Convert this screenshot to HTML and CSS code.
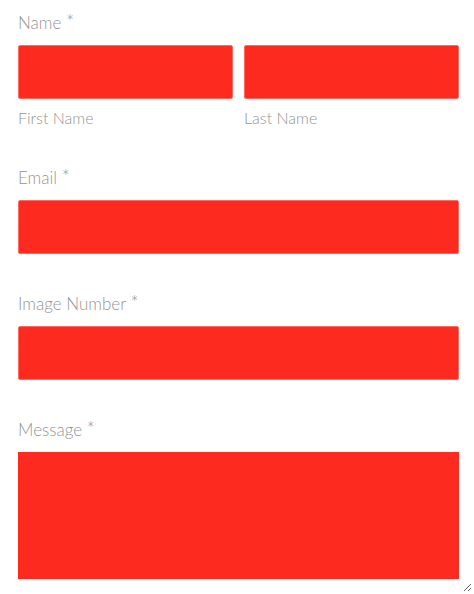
FILE: index.html
```html
<!DOCTYPE html>
<html lang="en">
<head>
    <meta charset="UTF-8">
    <meta name="viewport" content="width=device-width, initial-scale=1.0">
    <title>Contact</title>
    <link rel="stylesheet" href="styles.css">
</head>
<body>
    <form class="form">
        <div class="field">
            <label class="label">Name <span class="req">*</span></label>
            <div class="name-row">
                <div class="name-col">
                    <input class="input" type="text">
                    <span class="sub-label">First Name</span>
                </div>
                <div class="name-col">
                    <input class="input" type="text">
                    <span class="sub-label">Last Name</span>
                </div>
            </div>
        </div>
        <div class="field">
            <label class="label">Email <span class="req">*</span></label>
            <input class="input" type="email">
        </div>
        <div class="field">
            <label class="label">Image Number <span class="req">*</span></label>
            <input class="input" type="text">
        </div>
        <div class="field">
            <label class="label">Message <span class="req">*</span></label>
            <textarea class="textarea"></textarea>
        </div>
    </form>
</body>
</html>
```

FILE: styles.css
```css
html,
body {
    margin: 0;
    background-color: #FFF;
    font-family: 'Lato', 'Liberation Sans', sans-serif;
    font-weight: 300;
    color: #959595;
    overflow: hidden;
}

.form {
    display: flex;
    flex-direction: column;
    gap: 40px;
    padding: 13px 15px 0 18px;
}

.field {
    display: flex;
    flex-direction: column;
}

.label {
    display: block;
    font-size: 17px;
    line-height: 20px;
    height: 20px;
    margin-bottom: 12px;
}

.req {
    font-size: 19px;
    line-height: 0;
}

.name-row {
    display: grid;
    grid-template-columns: 1fr 1fr;
    gap: 11px;
}

.name-col {
    display: flex;
    flex-direction: column;
}

.sub-label {
    font-size: 16px;
    line-height: 20px;
    margin-top: 9px;
}

.input {
    display: block;
    box-sizing: border-box;
    width: 100%;
    height: 54px;
    margin: 0;
    border: 1px solid #ff6a60;
    border-radius: 2px;
    background-color: #fd2a1f;
    outline: none;
}

.textarea {
    display: block;
    box-sizing: border-box;
    width: calc(100% + 13px);
    height: 140px;
    margin: 0;
    padding: 0 13px 13px 0;
    border: none;
    background-color: #fd2a1f;
    background-clip: content-box;
    outline: none;
}
```
